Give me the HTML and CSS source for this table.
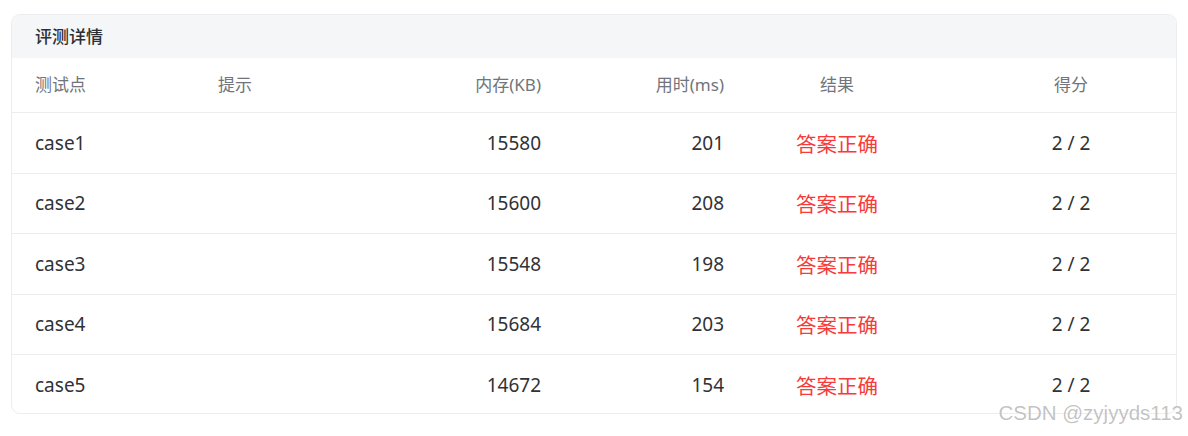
FILE: index.html
```html
<!DOCTYPE html>
<html lang="zh-CN">
<head>
<meta charset="utf-8">
<title>评测详情</title>
<link rel="stylesheet" href="styles.css">
</head>
<body>
<div class="page">
  <section class="card">
    <div class="card-head">评测详情</div>
    <div class="table">
      <div class="row head">
        <div class="c1">测试点</div>
        <div class="c2">提示</div>
        <div class="c3">内存(KB)</div>
        <div class="c4">用时(ms)</div>
        <div class="c5">结果</div>
        <div class="c6">得分</div>
      </div>
      <div class="row">
        <div class="c1">case1</div><div class="c2"></div><div class="c3">15580</div><div class="c4">201</div><div class="c5 ok">答案正确</div><div class="c6">2 / 2</div>
      </div>
      <div class="row">
        <div class="c1">case2</div><div class="c2"></div><div class="c3">15600</div><div class="c4">208</div><div class="c5 ok">答案正确</div><div class="c6">2 / 2</div>
      </div>
      <div class="row">
        <div class="c1">case3</div><div class="c2"></div><div class="c3">15548</div><div class="c4">198</div><div class="c5 ok">答案正确</div><div class="c6">2 / 2</div>
      </div>
      <div class="row">
        <div class="c1">case4</div><div class="c2"></div><div class="c3">15684</div><div class="c4">203</div><div class="c5 ok">答案正确</div><div class="c6">2 / 2</div>
      </div>
      <div class="row last">
        <div class="c1">case5</div><div class="c2"></div><div class="c3">14672</div><div class="c4">154</div><div class="c5 ok">答案正确</div><div class="c6">2 / 2</div>
      </div>
    </div>
  </section>
  <div class="watermark">CSDN @zyjyyds113</div>
</div>
</body>
</html>
```

FILE: styles.css
```css
* { box-sizing: border-box; }
html, body { margin: 0; padding: 0; background: #fff; }
body {
  font-family: "Noto Sans", "Noto Sans CJK SC", sans-serif;
  width: 1188px;
  height: 436px;
  overflow: hidden;
}
.page {
  position: relative;
  padding: 14px 11px 0 11px;
  height: 436px;
}
.card {
  width: 1166px;
  height: 400px;
  border: 1px solid #ebedf0;
  border-radius: 9px;
  overflow: hidden;
  background: #fff;
}
.card-head {
  height: 43px;
  background: #f5f6f8;
  padding-left: 23px;
  font-size: 17px;
  font-weight: 500;
  color: #2b2f36;
  line-height: 43px;
}
.row {
  display: grid;
  grid-template-columns: 183px 183px 187px 183px 178px 250px;
  align-items: center;
  height: 60.5px;
  border-bottom: 1px solid #ededed;
  font-size: 19px;
  color: #2f3237;
}
.row.head {
  height: 55px;
  padding-bottom: 4px;
  font-size: 17px;
  color: #71757b;
}
.row.last { border-bottom: none; }
.c1, .c2 { padding-left: 23px; }
.c3, .c4 { text-align: right; padding-right: 24px; }
.c5 { text-align: center; }
.c6 { text-align: center; padding-left: 40px; }
.ok { color: #f73a3a; font-size: 20.5px; }
.watermark {
  position: absolute;
  right: 5px;
  top: 401px;
  font-family: "Liberation Sans", Arial, sans-serif;
  font-size: 20.5px;
  color: rgba(120, 120, 120, 0.45);
  text-shadow: 0 0 1px rgba(255,255,255,0.9);
  white-space: nowrap;
}
```
